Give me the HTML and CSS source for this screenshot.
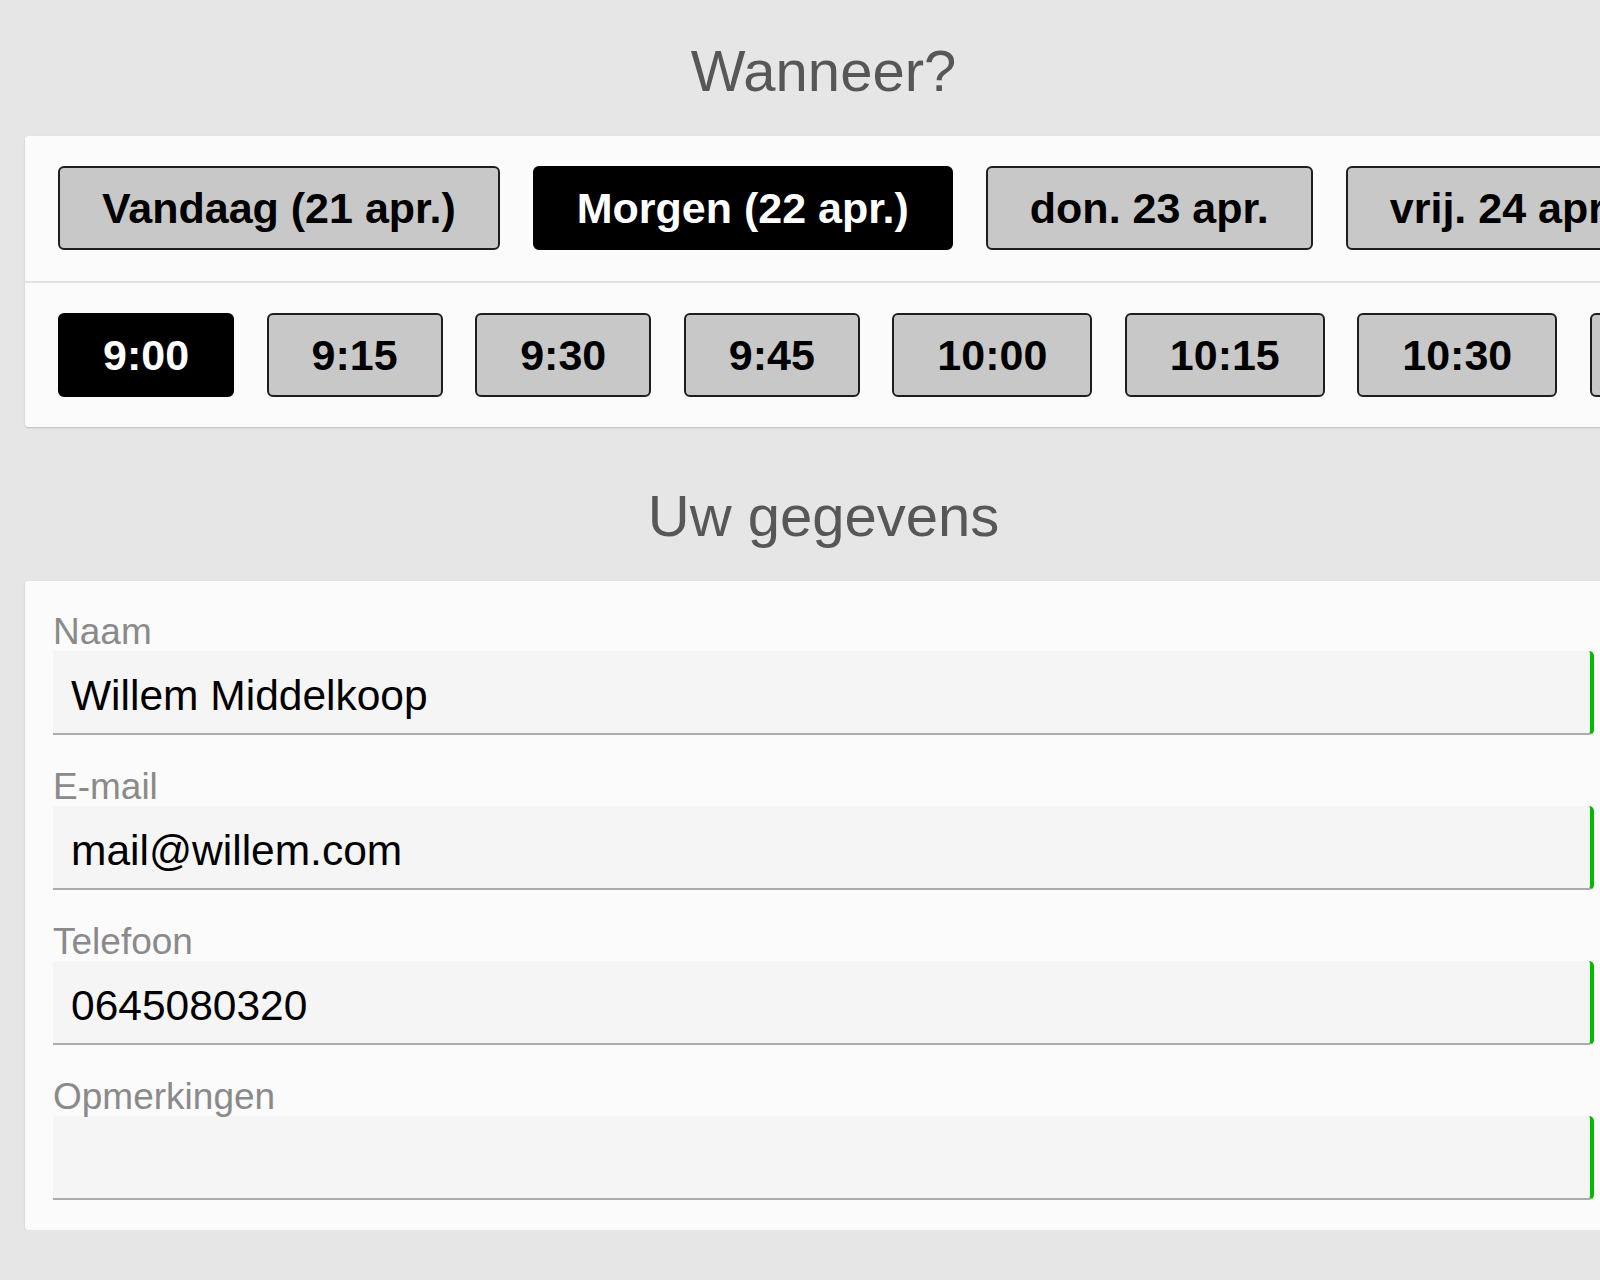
FILE: index.html
```html
<!DOCTYPE html>
<html lang="nl">
<head>
    <meta charset="UTF-8">
    <meta name="viewport" content="width=device-width, initial-scale=1.0">
    <title>Afspraak maken</title>
    <link rel="stylesheet" href="styles.css">
</head>
<body>
    <div class="page">
        <section class="section">
            <h2 class="section-title">Wanneer?</h2>
            <div class="card">
                <div class="pick-row dates">
                    <button type="button" class="pick">Vandaag (21 apr.)</button>
                    <button type="button" class="pick selected">Morgen (22 apr.)</button>
                    <button type="button" class="pick">don. 23 apr.</button>
                    <button type="button" class="pick">vrij. 24 apr.</button>
                    <button type="button" class="pick">zat. 25 apr.</button>
                </div>
                <div class="pick-row times">
                    <button type="button" class="pick selected">9:00</button>
                    <button type="button" class="pick">9:15</button>
                    <button type="button" class="pick">9:30</button>
                    <button type="button" class="pick">9:45</button>
                    <button type="button" class="pick">10:00</button>
                    <button type="button" class="pick">10:15</button>
                    <button type="button" class="pick">10:30</button>
                    <button type="button" class="pick">10:45</button>
                </div>
            </div>
        </section>

        <section class="section">
            <h2 class="section-title">Uw gegevens</h2>
            <form class="card details" id="detailsForm">
                <div class="field">
                    <label for="name">Naam</label>
                    <input type="text" id="name" name="name" value="Willem Middelkoop">
                </div>
                <div class="field">
                    <label for="email">E-mail</label>
                    <input type="text" id="email" name="email" value="mail@willem.com">
                </div>
                <div class="field">
                    <label for="phone">Telefoon</label>
                    <input type="text" id="phone" name="phone" value="0645080320">
                </div>
                <div class="field">
                    <label for="notes">Opmerkingen</label>
                    <input type="text" id="notes" name="notes" value="">
                </div>
            </form>
        </section>
    </div>
</body>
</html>
```

FILE: styles.css
```css
html {
    overflow-x: hidden;
}
body {
    font-family: "Liberation Sans", Arial, Helvetica, sans-serif;
    background-color: #e6e6e6;
    margin: 0;
}
.page {
    width: 1597px;
    margin-left: 25px;
    padding-top: 38px;
}
.section + .section {
    margin-top: 56px;
}
.section-title {
    margin: 0 0 32px;
    text-align: center;
    font-size: 58px;
    line-height: 66px;
    font-weight: normal;
    color: #575757;
}
.card {
    background-color: #fbfbfb;
    border-radius: 3px;
    box-shadow: 0 1px 2px rgba(0, 0, 0, 0.18);
    overflow: hidden;
}
.pick-row {
    display: flex;
    padding: 30px 33px 31px;
    white-space: nowrap;
}
.pick-row.dates {
    gap: 33px;
}
.pick-row.times {
    gap: 32.5px;
    border-top: 2px solid #e2e2e2;
    padding: 30px 33px;
}
.pick {
    flex: none;
    height: 84px;
    padding: 0 42px;
    border: 2px solid #1e1e1e;
    border-radius: 6px;
    background-color: #c8c8c8;
    color: #000;
    font-family: inherit;
    font-size: 43px;
    font-weight: bold;
    cursor: pointer;
}
.times .pick {
    padding: 0 43px;
}
.pick.selected {
    background-color: #000;
    border-color: #000;
    color: #fff;
}
.details {
    display: block;
    padding: 32px 28px 30px;
}
.field + .field {
    margin-top: 33px;
}
.field label {
    display: block;
    font-size: 37px;
    line-height: 38px;
    color: #8a8a8a;
}
.field input {
    display: block;
    width: 100%;
    height: 84px;
    box-sizing: border-box;
    margin: 0;
    padding: 8px 18px 0;
    border: none;
    border-bottom: 2px solid #ababab;
    border-right: 4px solid #00bb00;
    border-radius: 0 5px 5px 0;
    background-color: #f5f5f5;
    font-family: inherit;
    font-size: 42.5px;
    color: #000;
    outline: none;
}
```
